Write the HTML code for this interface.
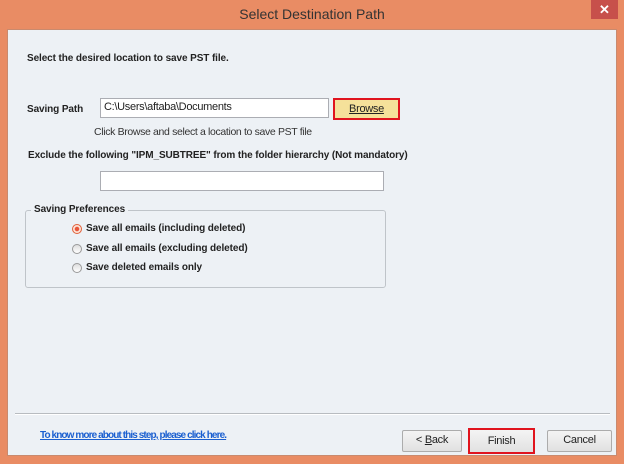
<!DOCTYPE html>
<html><head><style>
body{margin:0;width:624px;height:464px;background:#E98C64;position:relative;overflow:hidden;font-family:"Liberation Sans",sans-serif;font-size:11px;color:#222}
.a{position:absolute}
.b{font-weight:bold;font-size:10px;letter-spacing:-0.1px}
#client{left:7px;top:29px;width:610px;height:427px;background:#EDF1F5;border:1px solid #C98A6E;box-sizing:border-box}
.inp{background:#fff;border:1px solid #ABADB3;box-sizing:border-box}
.btn{background:linear-gradient(#F4F4F4,#E1E1E1);border:1px solid #ACACAC;box-sizing:border-box;text-align:center;line-height:19px;font-size:11px;border-radius:2px}
.r{width:10px;height:10px;border-radius:50%;border:1px solid #999;background:linear-gradient(#ddd,#fff);box-sizing:border-box}
</style></head><body>
<div class="a" style="left:0;top:6px;width:624px;text-align:center;font-size:14px;color:#333">Select Destination Path</div>
<div class="a" style="left:591px;top:0;width:27px;height:19px;background:#C7504B;color:#fff;text-align:center;font-size:13px;line-height:19px;font-weight:bold">✕</div>
<div class="a" id="client"></div>
<div class="a b" style="left:27px;top:53px">Select the desired location to save PST file.</div>
<div class="a b" style="left:27px;top:104px">Saving Path</div>
<div class="a inp" style="left:100px;top:98px;width:229px;height:20px;padding:2px 3px;font-size:11px;letter-spacing:-0.3px">C:\Users\aftaba\Documents</div>
<div class="a" style="left:333px;top:98px;width:67px;height:22px;border:2px solid #E0141E;box-sizing:border-box;background:#F5E19A;text-align:center;line-height:18px;text-decoration:underline;letter-spacing:-0.3px">Browse</div>
<div class="a" style="left:94px;top:126px;color:#333;font-size:10.5px;letter-spacing:-0.35px">Click Browse and select a location to save PST file</div>
<div class="a b" style="left:28px;top:150px">Exclude the following "IPM_SUBTREE" from the folder hierarchy (Not mandatory)</div>
<div class="a inp" style="left:100px;top:171px;width:284px;height:20px"></div>
<div class="a" style="left:25px;top:210px;width:361px;height:78px;border:1px solid #BFC4C9;border-radius:3px;box-sizing:border-box"></div>
<div class="a b" style="left:31px;top:204px;background:#EDF1F5;padding:0 3px">Saving Preferences</div>
<div class="a r" style="left:72px;top:224px;border-color:#E0603A;background:radial-gradient(#E8553A 35%,#FCE3D6 45%)"></div>
<div class="a b" style="left:86px;top:223px">Save all emails (including deleted)</div>
<div class="a r" style="left:72px;top:244px"></div>
<div class="a b" style="left:86px;top:243px">Save all emails (excluding deleted)</div>
<div class="a r" style="left:72px;top:263px"></div>
<div class="a b" style="left:86px;top:262px">Save deleted emails only</div>
<div class="a" style="left:15px;top:413px;width:595px;height:1px;background:#B8BCC0;border-bottom:1px solid #fff"></div>
<div class="a" style="left:40px;top:430px;color:#1A5FD0;font-weight:bold;text-decoration:underline;font-size:10px;letter-spacing:-0.9px">To know more about this step, please click here.</div>
<div class="a btn" style="left:402px;top:430px;width:60px;height:22px;letter-spacing:-0.3px">&lt; <u>B</u>ack</div>
<div class="a" style="left:468px;top:428px;width:67px;height:26px;border:2px solid #E0141E;box-sizing:border-box;background:linear-gradient(#F4F4F4,#E1E1E1);text-align:center;line-height:22px;letter-spacing:-0.3px">Finish</div>
<div class="a btn" style="left:547px;top:430px;width:65px;height:22px;letter-spacing:-0.3px">Cancel</div>
</body></html>
